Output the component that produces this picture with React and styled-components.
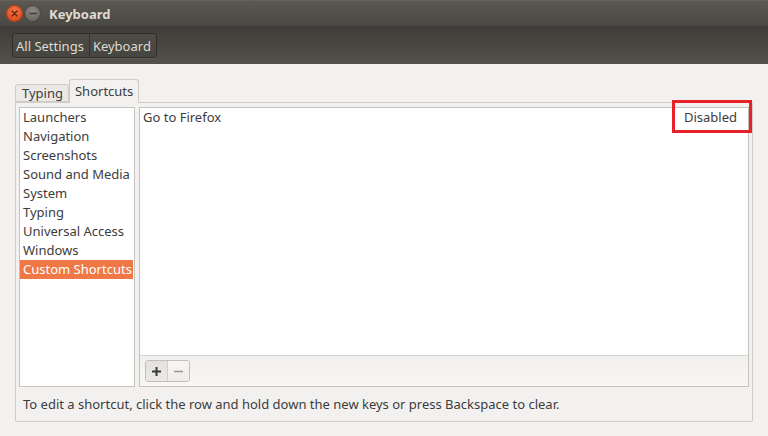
import React from "react";
import styled, { createGlobalStyle } from "styled-components";

const Global = createGlobalStyle`
  html, body { margin: 0; padding: 0; background: #f2f1f0; }
  body { font-family: "Noto Sans", "Open Sans", sans-serif; }
`;

const Window = styled.div`
  width: 768px;
  height: 436px;
  display: flex;
  flex-direction: column;
  overflow: hidden;
  box-sizing: border-box;
`;

const TitleBar = styled.div`
  height: 26px;
  flex: none;
  display: flex;
  align-items: center;
  padding-left: 7px;
  background: linear-gradient(#5b5851, #4a4843);
  border-top: 1px solid #65625b;
  box-sizing: border-box;
`;

const WinButton = styled.span`
  width: 15px;
  height: 15px;
  border-radius: 50%;
  margin-right: 3px;
  display: flex;
  align-items: center;
  justify-content: center;
  background: ${(p) =>
    p.$close
      ? "radial-gradient(circle at 50% 35%, #f47a4f, #e0501f 70%)"
      : "radial-gradient(circle at 50% 35%, #8d8a84, #6d6a64 70%)"};
  box-shadow: 0 0 0 1px ${(p) => (p.$close ? "#b8401a" : "#4a4843")};
`;

const Title = styled.span`
  margin-left: 6px;
  color: #dfdbd2;
  font-weight: bold;
  font-size: 13px;
  font-family: "Noto Sans", sans-serif;
`;

const Toolbar = styled.div`
  height: 38px;
  flex: none;
  display: flex;
  align-items: center;
  padding-left: 12px;
  background: linear-gradient(#3e3d39, #54514b);
  border-top: 1px solid #3a3935;
  box-sizing: border-box;
`;

const Crumbs = styled.div`
  display: flex;
  height: 23px;
  border: 1px solid #2e2d2a;
  border-radius: 3px;
  background: linear-gradient(#4e4c47, #47453f);
  box-shadow: 0 1px 0 rgba(255,255,255,0.08);
`;

const Crumb = styled.span`
  display: flex;
  align-items: center;
  padding: 0 5px 0 3px;
  color: #dfdbd2;
  font-size: 13px;
  & + & { border-left: 1px solid #34332f; }
`;

const Content = styled.div`
  flex: 1;
  display: flex;
  flex-direction: column;
  padding: 15px 15px 14px 15px;
  background: #f2f1f0;
  box-sizing: border-box;
  color: #3c3c3c;
  font-size: 13px;
`;

const TabBar = styled.div`
  height: 23px;
  display: flex;
  align-items: flex-end;
  flex: none;
`;

const Tab = styled.div`
  box-sizing: border-box;
  display: flex;
  align-items: center;
  height: ${(p) => (p.$active ? "24px" : "18px")};
  margin-bottom: ${(p) => (p.$active ? "-1px" : "0")};
  padding: ${(p) => (p.$active ? "0 5px 2px 5px" : "0 5px 0 6px")};
  border: 1px solid #cfccc8;
  border-bottom: ${(p) => (p.$active ? "none" : "1px solid #cfccc8")};
  border-radius: 3px 3px 0 0;
  background: ${(p) => (p.$active ? "#f2f1f0" : "#ebe9e7")};
  position: relative;
  z-index: ${(p) => (p.$active ? 1 : 0)};
`;

const Frame = styled.div`
  flex: 1;
  display: flex;
  flex-direction: column;
  border: 1px solid #cfccc8;
  border-radius: 0 2px 2px 2px;
  padding: 4px 3px 0 3px;
`;

const Panes = styled.div`
  flex: 1;
  display: flex;
  gap: 4px;
  min-height: 0;
`;

const SideList = styled.div`
  width: 116px;
  flex: none;
  box-sizing: border-box;
  background: #ffffff;
  border: 1px solid #c6c3be;
  display: flex;
  flex-direction: column;
`;

const SideItem = styled.div`
  height: 19px;
  box-sizing: border-box;
  display: flex;
  align-items: center;
  padding: 0 0 1px 3px;
  margin-right: 1px;
  white-space: nowrap;
  background: ${(p) => (p.$selected ? "#f07746" : "transparent")};
  color: ${(p) => (p.$selected ? "#ffffff" : "#3c3c3c")};
`;

const MainPane = styled.div`
  flex: 1;
  display: flex;
  flex-direction: column;
  border: 1px solid #c6c3be;
  box-sizing: border-box;
`;

const ShortcutList = styled.div`
  flex: 1;
  background: #ffffff;
`;

const ShortcutRow = styled.div`
  height: 19px;
  box-sizing: border-box;
  display: flex;
  align-items: center;
  justify-content: space-between;
  padding: 0 11px 1px 3px;
  position: relative;
`;

const Highlight = styled.span`
  position: absolute;
  right: -4px;
  top: -8px;
  width: 80px;
  height: 33px;
  box-sizing: border-box;
  border: 3px solid #e8202a;
`;

const PaneToolbar = styled.div`
  height: 30px;
  flex: none;
  display: flex;
  align-items: center;
  padding-left: 5px;
  border-top: 1px solid #d6d4d0;
  background: linear-gradient(#f1f0ef, #f8f7f6);
`;

const ButtonPair = styled.div`
  display: flex;
  height: 20px;
  border: 1px solid #c2bfba;
  border-radius: 3px;
  overflow: hidden;
`;

const SmallButton = styled.span`
  width: 21px;
  display: flex;
  align-items: center;
  justify-content: center;
  background: ${(p) =>
    p.$pressed ? "linear-gradient(#e4e2df, #ebe9e7)" : "linear-gradient(#f7f6f5, #eeecea)"};
  & + & { border-left: 1px solid #d2cfcb; }
`;

const Hint = styled.div`
  height: 34px;
  flex: none;
  display: flex;
  align-items: center;
  padding-left: 4px;
  padding-bottom: 1px;
  box-sizing: border-box;
  white-space: nowrap;
`;

const categories = [
  "Launchers",
  "Navigation",
  "Screenshots",
  "Sound and Media",
  "System",
  "Typing",
  "Universal Access",
  "Windows",
  "Custom Shortcuts",
];

export default function App() {
  return (
    <>
      <Global />
      <Window>
        <TitleBar>
          <WinButton $close>
            <svg width="7" height="7" viewBox="0 0 7 7">
              <path d="M1 1L6 6M6 1L1 6" stroke="#6b2410" strokeWidth="1.5" strokeLinecap="round" />
            </svg>
          </WinButton>
          <WinButton>
            <svg width="8" height="3" viewBox="0 0 8 3">
              <path d="M1 1.5H7" stroke="#3e3c38" strokeWidth="1.5" strokeLinecap="round" />
            </svg>
          </WinButton>
          <Title>Keyboard</Title>
        </TitleBar>
        <Toolbar>
          <Crumbs>
            <Crumb>All Settings</Crumb>
            <Crumb>Keyboard</Crumb>
          </Crumbs>
        </Toolbar>
        <Content>
          <TabBar>
            <Tab>Typing</Tab>
            <Tab $active>Shortcuts</Tab>
          </TabBar>
          <Frame>
            <Panes>
              <SideList>
                {categories.map((c) => (
                  <SideItem key={c} $selected={c === "Custom Shortcuts"}>
                    {c}
                  </SideItem>
                ))}
              </SideList>
              <MainPane>
                <ShortcutList>
                  <ShortcutRow>
                    <span>Go to Firefox</span>
                    <span>Disabled</span>
                    <Highlight />
                  </ShortcutRow>
                </ShortcutList>
                <PaneToolbar>
                  <ButtonPair>
                    <SmallButton $pressed>
                      <svg width="11" height="11" viewBox="0 0 11 11">
                        <path d="M5.5 1V10M1 5.5H10" stroke="#3a3a3a" strokeWidth="2" />
                      </svg>
                    </SmallButton>
                    <SmallButton>
                      <svg width="11" height="11" viewBox="0 0 11 11">
                        <path d="M1 5.5H10" stroke="#9a9893" strokeWidth="1.5" />
                      </svg>
                    </SmallButton>
                  </ButtonPair>
                </PaneToolbar>
              </MainPane>
            </Panes>
            <Hint>To edit a shortcut, click the row and hold down the new keys or press Backspace to clear.</Hint>
          </Frame>
        </Content>
      </Window>
    </>
  );
}
